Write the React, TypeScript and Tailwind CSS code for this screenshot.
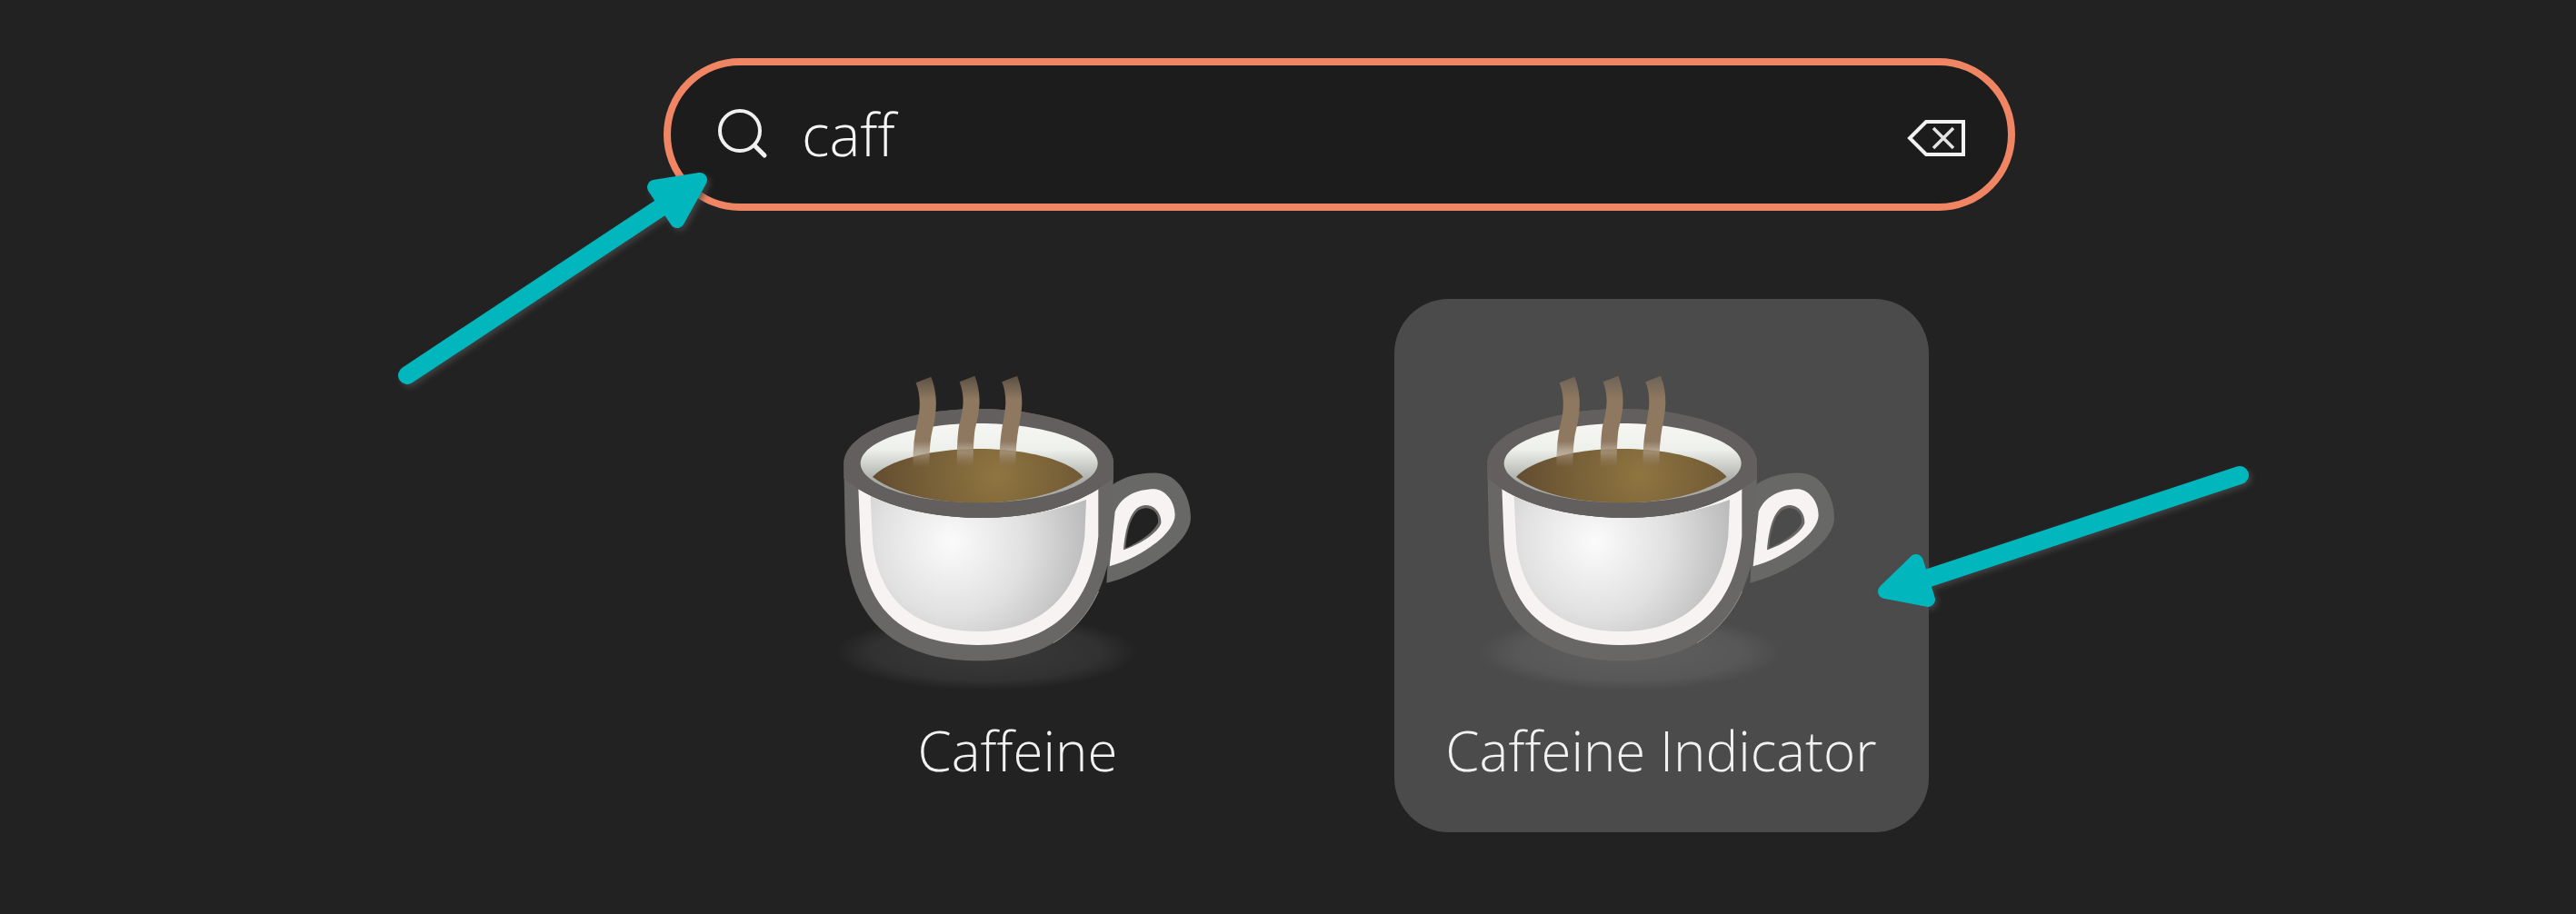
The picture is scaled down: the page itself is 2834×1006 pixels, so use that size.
import React from "react";

const apps = [
    { name: "Caffeine", active: false },
    { name: "Caffeine Indicator", active: true },
];

// coordinates are the 3x zoom of the 480x400 icon box
const CupIcon: React.FC = () => (
    <svg width="480" height="400" viewBox="0 0 1440 1200" className="shrink-0">
        <defs>
            <radialGradient id="cupShadow" cx="615" cy="985" r="500" gradientUnits="userSpaceOnUse" gradientTransform="translate(0 738) scale(1 0.25)">
                <stop offset="0" stopColor="#fff" stopOpacity="0.11" />
                <stop offset="0.75" stopColor="#fff" stopOpacity="0.07" />
                <stop offset="1" stopColor="#fff" stopOpacity="0" />
            </radialGradient>
            <radialGradient id="cupBody" cx="500" cy="620" r="480" gradientUnits="userSpaceOnUse">
                <stop offset="0" stopColor="#fbfbfb" />
                <stop offset="0.5" stopColor="#e2e1e1" />
                <stop offset="1" stopColor="#b6b7b8" />
            </radialGradient>
            <linearGradient id="cupRim" x1="0" y1="228" x2="0" y2="420" gradientUnits="userSpaceOnUse">
                <stop offset="0" stopColor="#f6f7f3" />
                <stop offset="0.45" stopColor="#eef0ec" />
                <stop offset="1" stopColor="#a9aba6" />
            </linearGradient>
            <radialGradient id="coffee" cx="650" cy="400" r="420" gradientUnits="userSpaceOnUse">
                <stop offset="0" stopColor="#8f7540" />
                <stop offset="1" stopColor="#624c30" />
            </radialGradient>
            <linearGradient id="steam" x1="0" y1="75" x2="0" y2="370" gradientUnits="userSpaceOnUse">
                <stop offset="0" stopColor="#8e7860" stopOpacity="0.55" />
                <stop offset="0.25" stopColor="#8e7860" />
                <stop offset="0.72" stopColor="#8e7860" />
                <stop offset="0.85" stopColor="#a8957f" stopOpacity="0.75" />
                <stop offset="1" stopColor="#8e7860" stopOpacity="0.1" />
            </linearGradient>
        </defs>

        <ellipse cx="615" cy="985" rx="500" ry="125" fill="url(#cupShadow)" />

        {/* handle */}
        <path
            fillRule="evenodd"
            fill="#686867"
            d="M1030 432 C1075 400 1130 390 1180 392 C1250 395 1290 470 1290 540 C1290 620 1150 720 1012 755 Z M1075 640 C1080 580 1095 510 1140 508 C1170 508 1185 530 1182 555 C1170 590 1110 625 1075 640 Z"
        />
        <path
            fillRule="evenodd"
            fill="#f8f3f3"
            d="M1040 520 C1060 470 1110 445 1170 445 C1210 448 1238 490 1238 530 C1238 590 1130 670 1022 700 Z M1068 646 C1074 578 1090 500 1140 498 C1176 498 1194 530 1192 558 C1176 598 1110 632 1068 646 Z"
        />

        {/* cup */}
        <path
            fill="#686766"
            d="M145 360 C145 260 350 180 590 180 C830 180 1035 260 1035 360 L1032 600 C1005 860 860 1012 590 1012 C320 1012 165 880 150 620 Z"
        />
        <path
            fill="#f8f3f3"
            d="M193 440 C300 510 450 540 600 540 C750 540 880 510 985 440 L985 600 C965 820 840 960 590 960 C340 960 215 840 200 620 Z"
        />
        <path
            fill="url(#cupBody)"
            d="M233 468 C330 515 470 540 600 540 C730 540 850 515 945 480 L940 600 C920 790 800 915 590 915 C380 915 260 810 240 620 Z"
        />

        {/* rim and coffee */}
        <path
            fill="#645f5f"
            d="M145 360 C145 260 350 180 590 180 C830 180 1035 260 1035 360 L1035 410 L985 445 C880 510 750 540 600 540 C450 540 300 510 193 445 L145 410 Z"
        />
        <path fill="url(#cupRim)" d="M200 360 C200 290 370 228 590 228 C810 228 983 290 983 360 C983 430 810 490 590 490 C370 490 200 430 200 360 Z" />
        <path fill="url(#coffee)" d="M240 405 C290 350 430 312 590 312 C750 312 890 350 935 405 C850 465 720 490 590 490 C450 490 320 465 240 405 Z" />
        <path fill="#645f5f" d="M197 410 C300 470 450 490 590 490 C730 490 880 470 985 410 L985 445 C880 510 750 540 600 540 C450 540 300 510 193 445 Z" />

        {/* steam */}
        <g fill="none" stroke="url(#steam)" strokeWidth="54">
            <path d="M408 84 C430 140 425 190 412 240 C402 280 400 320 400 370" />
            <path d="M552 81 C575 140 565 190 552 240 C545 280 545 320 545 370" />
            <path d="M692 81 C715 140 705 190 695 240 C688 280 685 320 685 370" />
        </g>

        {/* thin highlight along the lower right edge */}
        <path
            d="M1032 600 C1005 860 860 1012 590 1012"
            pathLength={100}
            strokeDasharray="0 28 34 100"
            fill="none"
            stroke="#8d8d8b"
            strokeWidth="3"
        />
    </svg>
);

const AppTile: React.FC<{ name: string; active: boolean }> = ({ name, active }) => (
    <div className={`w-[588px] h-[587px] rounded-[60px] pt-[61px] flex flex-col items-center ${active ? "bg-[#4b4b4b]" : ""}`}>
        <CupIcon />
        <div className="mt-[6px] text-[60px] leading-[60px] font-light text-[#f2f2f2] whitespace-nowrap">
            {name}
        </div>
    </div>
);

const App: React.FC = () => {
    return (
        <div className="relative w-full h-[1006px] overflow-hidden bg-[#222222] font-['Open_Sans',sans-serif]">
            <div className="ml-[730px] w-[1487px] pt-[64px] flex flex-col">
                {/* Search bar */}
                <div className="h-[168px] rounded-[84px] border-[8px] border-[#f08563] bg-[#1c1c1c] pl-[52px] pr-[47px] flex items-center">
                    <svg width="56" height="56" viewBox="0 0 56 56" fill="none" stroke="#f0f0f0" strokeWidth="4" className="shrink-0">
                        <circle cx="24" cy="24" r="22" />
                        <path d="M41 41 L51 51" strokeLinecap="round" strokeWidth="5" />
                    </svg>
                    <div className="ml-[36px] flex-1 text-[64px] leading-[70px] font-light text-[#f5f5f5]">caff</div>
                    <svg width="64" height="40" viewBox="0 0 64 40" fill="none" stroke="#f2f2f2" strokeWidth="4" className="shrink-0 mt-2">
                        <path d="M21 2 H62 V38 H21 L3 20 Z" />
                        <path d="M29 9 L51 31 M51 9 L29 31" strokeWidth="3.5" stroke="#e4e4e4" />
                    </svg>
                </div>

                {/* Results */}
                <div className="mt-[97px] flex justify-center gap-[120px]">
                    {apps.map((app) => (
                        <AppTile key={app.name} name={app.name} active={app.active} />
                    ))}
                </div>
            </div>

            {/* Annotation arrows */}
            <svg
                className="absolute inset-0 pointer-events-none [filter:drop-shadow(3px_3px_3px_rgba(75,75,75,0.75))]"
                width="2834"
                height="1006"
                viewBox="0 0 2834 1006"
            >
                <g stroke="#01b7bd" fill="#01b7bd" strokeLinecap="round" strokeLinejoin="round">
                    <path d="M448 413 L735 223" strokeWidth="20" fill="none" />
                    <path d="M720 206 L770 198 L745 243 Z" strokeWidth="16" />
                    <path d="M2464 523 L2110 640" strokeWidth="20" fill="none" />
                    <path d="M2108 618 L2074 651 L2121 660 Z" strokeWidth="16" />
                </g>
            </svg>
        </div>
    );
};

export default App;
